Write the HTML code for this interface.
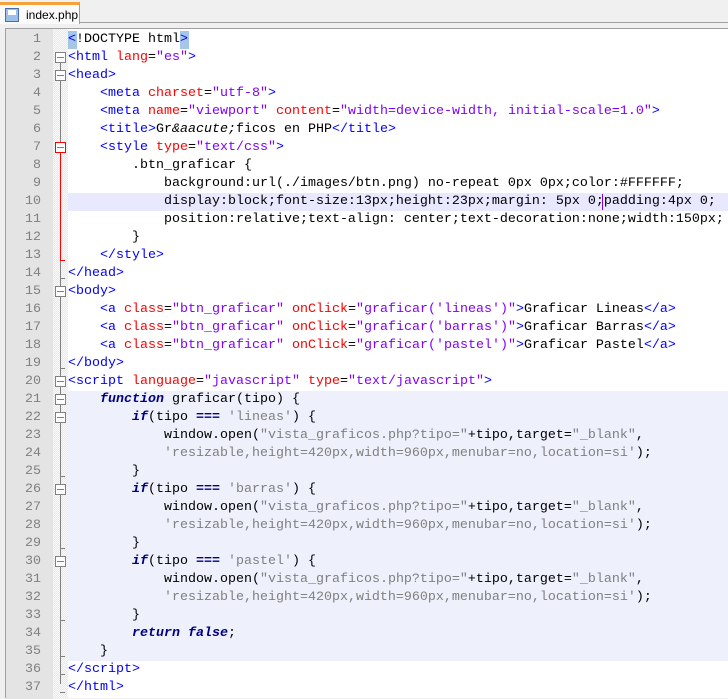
<!DOCTYPE html>
<html><head><meta charset="utf-8"><style>
*{margin:0;padding:0;box-sizing:border-box}
body{width:728px;height:698px;background:#f0f0f0;position:relative;overflow:hidden;font-family:"Liberation Mono",monospace;font-size:13.33px}
.tabbar{position:absolute;left:0;top:0;width:728px;height:23px;background:#f0f0f0;border-bottom:1px solid #a0a0a0}
.tab{position:absolute;left:0;top:2px;width:80px;height:22px;background:#fafafa;border-top:3px solid #f4a33a;border-right:1px solid #a0a0a0;font-family:"Liberation Sans",sans-serif;font-size:12px;color:#000;padding:3px 0 0 26px}
.ico{position:absolute;left:5px;top:3px;width:14px;height:14px;border:1px solid #4a6fa8;background:#9cc0ea}
.ico:after{content:"";position:absolute;left:2px;top:1px;width:8px;height:5px;background:#fff}
.editor{position:absolute;left:5px;top:28px;width:723px;height:670px;background:#fff;border-left:1px solid #a0a0a0;border-top:1px solid #a0a0a0}
.gut{position:absolute;left:0;top:0;width:47px;height:670px;background:#e4e4e4}
.fold{position:absolute;left:47px;top:0;width:15px;height:670px;background-color:#f4f4f4;background-image:repeating-conic-gradient(#e8e8e8 0 25%,#fafafa 0 50%);background-size:2px 2px}
.ln{position:absolute;left:0;width:35px;text-align:right;color:#808080;height:18px;line-height:18px;margin-top:1px}
.code{position:absolute;left:62px;height:18px;line-height:18px;white-space:pre;color:#000;right:0;margin-top:1px}
.t{color:#0000ff}.a{color:#ff0000}.s{color:#8000ff}.g{color:#808080}.k{color:#000080;font-weight:bold;font-style:italic}.i{color:#000080;font-style:italic;font-weight:bold}.o{color:#000080;font-weight:bold}
.box{position:absolute;left:49px;width:11px;height:11px;border:1px solid #808080;background:#fff}
.box:after{content:"";position:absolute;left:1px;top:4px;width:7px;height:1px;background:#808080}
.vl{position:absolute;left:54px;width:1px;background:#808080}
.hl{position:absolute;left:54px;width:5px;height:1px;background:#808080}
</style></head><body>
<div class="tabbar"><div class="tab"><div class="ico"></div>index.php</div></div>
<div class="editor">
<div class="gut"></div><div class="fold"></div>
<div style="position:absolute;left:62px;top:362px;right:0;height:270px;background:#eef0fb"></div>
<div style="position:absolute;left:62px;top:164px;right:0;height:18px;background:#e8e8ff"></div>
<div style="position:absolute;left:62px;top:2px;width:9px;height:18px;background:#a6c6e8"></div>
<div style="position:absolute;left:174px;top:2px;width:9px;height:18px;background:#a6c6e8"></div>
<div style="position:absolute;left:596px;top:165px;width:1px;height:16px;background:#8000ff"></div>
<div class="vl" style="top:33px;height:622px"></div>
<div class="vl" style="top:123px;height:108px;background:#f00"></div>
<div class="hl" style="top:231px;background:#f00"></div>
<div class="hl" style="top:249px"></div><div class="hl" style="top:339px"></div>
<div class="hl" style="top:447px"></div><div class="hl" style="top:519px"></div><div class="hl" style="top:591px"></div>
<div class="hl" style="top:627px"></div><div class="hl" style="top:645px"></div><div class="hl" style="top:663px"></div>
<div class="box" style="top:23px"></div><div class="box" style="top:41px"></div>
<div class="box" style="top:113px;border-color:#f00"></div>
<div class="box" style="top:257px"></div><div class="box" style="top:347px"></div>
<div class="box" style="top:365px"></div><div class="box" style="top:383px"></div>
<div class="box" style="top:455px"></div><div class="box" style="top:527px"></div>
<div class="ln" style="top:1px">1</div><div class="code" style="top:1px"><span class="t">&lt;</span>!DOCTYPE html<span class="t">&gt;</span></div>
<div class="ln" style="top:19px">2</div><div class="code" style="top:19px"><span class="t">&lt;html</span> <span class="a">lang</span>=<span class="s">"es"</span><span class="t">&gt;</span></div>
<div class="ln" style="top:37px">3</div><div class="code" style="top:37px"><span class="t">&lt;head&gt;</span></div>
<div class="ln" style="top:55px">4</div><div class="code" style="top:55px">    <span class="t">&lt;meta</span> <span class="a">charset</span>=<span class="s">"utf-8"</span><span class="t">&gt;</span></div>
<div class="ln" style="top:73px">5</div><div class="code" style="top:73px">    <span class="t">&lt;meta</span> <span class="a">name</span>=<span class="s">"viewport"</span> <span class="a">content</span>=<span class="s">"width=device-width, initial-scale=1.0"</span><span class="t">&gt;</span></div>
<div class="ln" style="top:91px">6</div><div class="code" style="top:91px">    <span class="t">&lt;title&gt;</span>Gr<i>&amp;aacute;</i>ficos en PHP<span class="t">&lt;/title&gt;</span></div>
<div class="ln" style="top:109px">7</div><div class="code" style="top:109px">    <span class="t">&lt;style</span> <span class="a">type</span>=<span class="s">"text/css"</span><span class="t">&gt;</span></div>
<div class="ln" style="top:127px">8</div><div class="code" style="top:127px">        .btn_graficar {</div>
<div class="ln" style="top:145px">9</div><div class="code" style="top:145px">            background:url(./images/btn.png) no-repeat 0px 0px;color:#FFFFFF;</div>
<div class="ln" style="top:163px">10</div><div class="code" style="top:163px">            display:block;font-size:13px;height:23px;margin: 5px 0;padding:4px 0;</div>
<div class="ln" style="top:181px">11</div><div class="code" style="top:181px">            position:relative;text-align: center;text-decoration:none;width:150px;</div>
<div class="ln" style="top:199px">12</div><div class="code" style="top:199px">        }</div>
<div class="ln" style="top:217px">13</div><div class="code" style="top:217px">    <span class="t">&lt;/style&gt;</span></div>
<div class="ln" style="top:235px">14</div><div class="code" style="top:235px"><span class="t">&lt;/head&gt;</span></div>
<div class="ln" style="top:253px">15</div><div class="code" style="top:253px"><span class="t">&lt;body&gt;</span></div>
<div class="ln" style="top:271px">16</div><div class="code" style="top:271px">    <span class="t">&lt;a</span> <span class="a">class</span>=<span class="s">"btn_graficar"</span> <span class="a">onClick</span>=<span class="s">"graficar('lineas')"</span><span class="t">&gt;</span>Graficar Lineas<span class="t">&lt;/a&gt;</span></div>
<div class="ln" style="top:289px">17</div><div class="code" style="top:289px">    <span class="t">&lt;a</span> <span class="a">class</span>=<span class="s">"btn_graficar"</span> <span class="a">onClick</span>=<span class="s">"graficar('barras')"</span><span class="t">&gt;</span>Graficar Barras<span class="t">&lt;/a&gt;</span></div>
<div class="ln" style="top:307px">18</div><div class="code" style="top:307px">    <span class="t">&lt;a</span> <span class="a">class</span>=<span class="s">"btn_graficar"</span> <span class="a">onClick</span>=<span class="s">"graficar('pastel')"</span><span class="t">&gt;</span>Graficar Pastel<span class="t">&lt;/a&gt;</span></div>
<div class="ln" style="top:325px">19</div><div class="code" style="top:325px"><span class="t">&lt;/body&gt;</span></div>
<div class="ln" style="top:343px">20</div><div class="code" style="top:343px"><span class="t">&lt;script</span> <span class="a">language</span>=<span class="s">"javascript"</span> <span class="a">type</span>=<span class="s">"text/javascript"</span><span class="t">&gt;</span></div>
<div class="ln" style="top:361px">21</div><div class="code" style="top:361px">    <span class="k">function</span> graficar(tipo) {</div>
<div class="ln" style="top:379px">22</div><div class="code" style="top:379px">        <span class="i">if</span>(tipo <span class="o">===</span> <span class="g">'lineas'</span>) {</div>
<div class="ln" style="top:397px">23</div><div class="code" style="top:397px">            window.open(<span class="g">"vista_graficos.php?tipo="</span>+tipo,target=<span class="g">"_blank"</span>,</div>
<div class="ln" style="top:415px">24</div><div class="code" style="top:415px">            <span class="g">'resizable,height=420px,width=960px,menubar=no,location=si'</span>);</div>
<div class="ln" style="top:433px">25</div><div class="code" style="top:433px">        }</div>
<div class="ln" style="top:451px">26</div><div class="code" style="top:451px">        <span class="i">if</span>(tipo <span class="o">===</span> <span class="g">'barras'</span>) {</div>
<div class="ln" style="top:469px">27</div><div class="code" style="top:469px">            window.open(<span class="g">"vista_graficos.php?tipo="</span>+tipo,target=<span class="g">"_blank"</span>,</div>
<div class="ln" style="top:487px">28</div><div class="code" style="top:487px">            <span class="g">'resizable,height=420px,width=960px,menubar=no,location=si'</span>);</div>
<div class="ln" style="top:505px">29</div><div class="code" style="top:505px">        }</div>
<div class="ln" style="top:523px">30</div><div class="code" style="top:523px">        <span class="i">if</span>(tipo <span class="o">===</span> <span class="g">'pastel'</span>) {</div>
<div class="ln" style="top:541px">31</div><div class="code" style="top:541px">            window.open(<span class="g">"vista_graficos.php?tipo="</span>+tipo,target=<span class="g">"_blank"</span>,</div>
<div class="ln" style="top:559px">32</div><div class="code" style="top:559px">            <span class="g">'resizable,height=420px,width=960px,menubar=no,location=si'</span>);</div>
<div class="ln" style="top:577px">33</div><div class="code" style="top:577px">        }</div>
<div class="ln" style="top:595px">34</div><div class="code" style="top:595px">        <span class="k">return</span> <span class="k">false</span>;</div>
<div class="ln" style="top:613px">35</div><div class="code" style="top:613px">    }</div>
<div class="ln" style="top:631px">36</div><div class="code" style="top:631px"><span class="t">&lt;/script&gt;</span></div>
<div class="ln" style="top:649px">37</div><div class="code" style="top:649px"><span class="t">&lt;/html&gt;</span></div>
</div>
</body></html>
